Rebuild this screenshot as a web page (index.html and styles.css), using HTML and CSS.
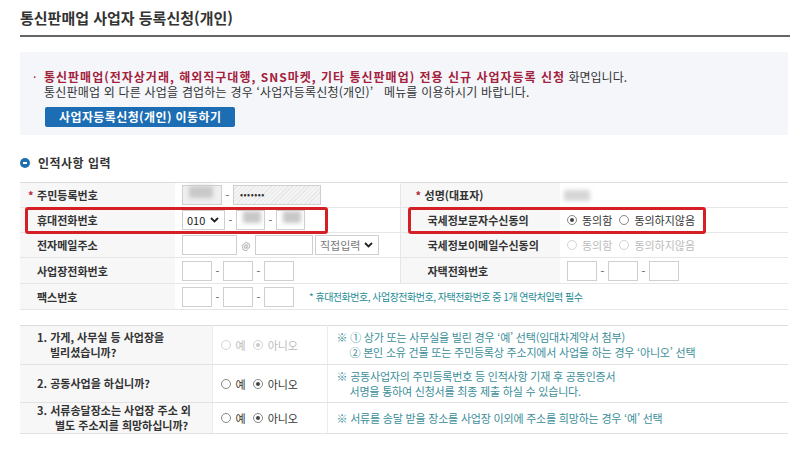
FILE: index.html
```html
<html lang="ko">
<head>
    <meta charset="UTF-8">
    <title>통신판매업 사업자 등록신청(개인)</title>
    <link rel="stylesheet" href="styles.css">
</head>
<body>
<div class="page">
    <h1 class="title">통신판매업 사업자 등록신청(개인)</h1>

    <div class="notice">
        <p class="notice-main"><span class="bullet">·</span><strong>통신판매업(전자상거래, 해외직구대행, SNS마켓, 기타 통신판매업) 전용 신규 사업자등록 신청</strong> 화면입니다.</p>
        <p class="notice-sub">통신판매업 외 다른 사업을 겸업하는 경우 ‘사업자등록신청(개인)’&nbsp;&nbsp; 메뉴를 이용하시기 바랍니다.</p>
        <a class="btn" href="#">사업자등록신청(개인) 이동하기</a>
    </div>

    <h2 class="section"><span class="section-icon"></span>인적사항 입력</h2>

    <div class="form-wrap">
        <table class="form">
            <colgroup><col class="c1"><col class="c2"><col class="c3"><col class="c4"></colgroup>
            <tr>
                <th><span class="req">*</span> 주민등록번호</th>
                <td><span class="box w40 filled"><span class="blur"></span></span><span class="dash">-</span><span class="box w88 hatch">•••••••</span></td>
                <th><span class="req">*</span> 성명(대표자)</th>
                <td><span class="blur name"></span></td>
            </tr>
            <tr>
                <th class="ind">휴대전화번호</th>
                <td><span class="select w43">010<svg width="9" height="6" viewBox="0 0 9 6"><path d="M1 1l3.5 3.5L8 1" fill="none" stroke="#222" stroke-width="1.8"/></svg></span><span class="dash">-</span><span class="box w29"><span class="blur sm"></span></span><span class="dash">-</span><span class="box w29"><span class="blur sm"></span></span></td>
                <th class="ind">국세정보문자수신동의</th>
                <td><label class="radio on"><span class="dot"></span>동의함</label><label class="radio"><span class="dot"></span>동의하지않음</label></td>
            </tr>
            <tr>
                <th class="ind">전자메일주소</th>
                <td><span class="box w55"></span><span class="at">@</span><span class="box w58"></span><span class="select w64 gray">직접입력<svg width="9" height="6" viewBox="0 0 9 6"><path d="M1 1l3.5 3.5L8 1" fill="none" stroke="#222" stroke-width="1.8"/></svg></span></td>
                <th class="ind">국세정보이메일수신동의</th>
                <td><label class="radio off"><span class="dot"></span>동의함</label><label class="radio off"><span class="dot"></span>동의하지않음</label></td>
            </tr>
            <tr class="tall">
                <th class="ind">사업장전화번호</th>
                <td><span class="box w30"></span><span class="dash">-</span><span class="box w30"></span><span class="dash">-</span><span class="box w30"></span></td>
                <th class="ind">자택전화번호</th>
                <td><span class="box w30"></span><span class="dash">-</span><span class="box w30"></span><span class="dash">-</span><span class="box w30"></span></td>
            </tr>
            <tr class="tall">
                <th class="ind">팩스번호</th>
                <td colspan="3"><span class="box w30"></span><span class="dash">-</span><span class="box w30"></span><span class="dash">-</span><span class="box w30"></span><span class="hint">* 휴대전화번호, 사업장전화번호, 자택전화번호 중 1개 연락처입력 필수</span></td>
            </tr>
        </table>
        <div class="mark mark-left"></div>
        <div class="mark mark-right"></div>
    </div>

    <table class="qa">
        <colgroup><col class="q1"><col class="q2"><col class="q3"></colgroup>
        <tr class="r1">
            <th>1. 가게, 사무실 등 사업장을<br><span class="ind1">빌리셨습니까?</span></th>
            <td><label class="radio off"><span class="dot"></span>예</label><label class="radio off on"><span class="dot"></span>아니오</label></td>
            <td class="note">※ ① 상가 또는 사무실을 빌린 경우 ‘예’ 선택(임대차계약서 첨부)<br><span class="ind2">② 본인 소유 건물 또는 주민등록상 주소지에서 사업을 하는 경우 ‘아니오’ 선택</span></td>
        </tr>
        <tr class="r2">
            <th>2. 공동사업을 하십니까?</th>
            <td><label class="radio"><span class="dot"></span>예</label><label class="radio on"><span class="dot"></span>아니오</label></td>
            <td class="note">※ 공동사업자의 주민등록번호 등 인적사항 기재 후 공동인증서<br><span class="ind2">서명을 통하여 신청서를 최종 제출 하실 수 있습니다.</span></td>
        </tr>
        <tr class="r3">
            <th>3. 서류송달장소는 사업장 주소 외<br><span class="ind3">별도 주소지를 희망하십니까?</span></th>
            <td><label class="radio"><span class="dot"></span>예</label><label class="radio on"><span class="dot"></span>아니오</label></td>
            <td class="note">※ 서류를 송달 받을 장소를 사업장 이외에 주소를 희망하는 경우 ‘예’ 선택</td>
        </tr>
    </table>
</div>
</body>
</html>
```

FILE: styles.css
```css
body {
    margin: 0;
    padding: 0;
    background: #fff;
    font-family: "Noto Sans CJK KR", "Noto Sans", sans-serif;
    font-size: 11px;
    color: #333;
}
.page {
    padding: 9px 12px 0 20px;
}
.title {
    margin: 0;
    font-size: 15px;
    line-height: 18px;
    font-weight: bold;
    color: #333;
    padding-bottom: 8px;
    border-bottom: 2px solid #666;
    margin-right: -2px;
}
.notice {
    margin-top: 15px;
    background: #f4f6fa;
    padding: 17px 13px 7px 13px;
    height: 59px;
}
.notice p {
    margin: 0;
    font-size: 12px;
    line-height: 15px;
}
.notice-main strong {
    color: #a3213a;
    font-weight: bold;
    letter-spacing: 1px;
}
.bullet {
    display: inline-block;
    width: 11px;
    color: #a3213a;
}
.notice-sub {
    padding-left: 11px;
    letter-spacing: 0.2px;
}
.btn {
    display: inline-block;
    margin: 8px 0 0 12px;
    height: 20px;
    line-height: 20px;
    padding: 0 14px;
    background: #1c6db3;
    color: #fff;
    font-size: 12px;
    font-weight: bold;
    letter-spacing: 0.4px;
    text-decoration: none;
    border-radius: 2px;
}
.section {
    margin: 20px 0 12px 0;
    font-size: 12px;
    letter-spacing: 0.5px;
    line-height: 15px;
    font-weight: bold;
    color: #333;
    display: flex;
    align-items: center;
}
.section-icon {
    width: 10px;
    height: 10px;
    border-radius: 50%;
    background: #1f6fae;
    margin-right: 8px;
    position: relative;
}
.section-icon::after {
    content: "";
    position: absolute;
    left: 3px;
    top: 4px;
    width: 4px;
    height: 2px;
    background: #fff;
}
.form-wrap {
    position: relative;
}
table {
    border-collapse: collapse;
    table-layout: fixed;
    width: 768px;
    font-size: 11px;
    color: #333;
}
.c1 { width: 155px; }
.c2 { width: 225px; }
.c3 { width: 160px; }
.c4 { width: 228px; }
.form {
    border-top: 1px solid #dcdcdc;
}
.form th, .form td {
    height: 25px;
    padding: 0;
    border-bottom: 1px solid #e6e6e6;
    vertical-align: middle;
    white-space: nowrap;
}
.form tr.tall th, .form tr.tall td {
    height: 26px;
}
.form th {
    background: #f7f7f7;
    text-align: left;
    font-weight: bold;
    color: #333;
    padding-left: 8px;
    border-left: 1px solid #e6e6e6;
}
.form th:first-child {
    border-left: none;
}
.form th.ind {
    padding-left: 17px;
}
.form th:nth-child(3) {
    padding-left: 15px;
}
.form th.ind:nth-child(3) {
    padding-left: 27px;
}
.form td {
    padding-left: 7px;
}
.req {
    color: #b3263a;
    display: inline-block;
    width: 6px;
}
.box {
    display: inline-block;
    vertical-align: middle;
    height: 20px;
    border: 1px solid #cfcfcf;
    background: #fff;
    box-sizing: border-box;
    line-height: 18px;
    padding-left: 6px;
}
.w29 { width: 29px; }
.w30 { width: 30px; }
.w40 { width: 40px; }
.w55 { width: 55px; }
.w58 { width: 58px; }
.w88 { width: 88px; }
.box.filled {
    background: #f0f0f0;
}
.box.hatch {
    background: repeating-linear-gradient(135deg, #f4f4f4 0, #f4f4f4 2px, #e8e8e8 2px, #e8e8e8 3px);
    font-size: 9px;
    letter-spacing: 0.5px;
    color: #333;
}
.blur {
    display: inline-block;
    width: 24px;
    height: 12px;
    background: #c8c8c8;
    filter: blur(2px);
    vertical-align: middle;
}
.blur.sm {
    width: 18px;
}
.blur.name {
    width: 26px;
    height: 11px;
    background: #d6d6d6;
    margin-left: -3px;
}
.dash, .at {
    display: inline-block;
    width: 11px;
    text-align: center;
    vertical-align: middle;
    color: #555;
}
.at {
    width: 18px;
    font-size: 9px;
    color: #888;
}
.select {
    display: inline-flex;
    vertical-align: middle;
    align-items: center;
    justify-content: space-between;
    height: 20px;
    box-sizing: border-box;
    border: 1px solid #cfcfcf;
    padding: 0 5px 0 4px;
    background: #fff;
    color: #222;
}
.select.gray {
    color: #777;
    margin-left: 2px;
}
.w43 { width: 43px; }
.w64 { width: 64px; }
.hint {
    color: #1f8b96;
    font-size: 10px;
    letter-spacing: -0.5px;
    margin-left: 15px;
    vertical-align: middle;
}
.radio {
    display: inline-flex;
    align-items: center;
    margin-right: 7px;
    color: #333;
    vertical-align: middle;
}
.radio .dot {
    width: 10px;
    height: 10px;
    border: 1px solid #888;
    border-radius: 50%;
    box-sizing: border-box;
    margin-right: 5px;
    position: relative;
    background: #fff;
}
.radio.on .dot::after {
    content: "";
    position: absolute;
    left: 2px;
    top: 2px;
    width: 4px;
    height: 4px;
    border-radius: 50%;
    background: #444;
}
.radio.off {
    color: #bbb;
}
.radio.off .dot {
    border-color: #d4d4d4;
}
.radio.off.on .dot::after {
    background: #c8c8c8;
}
.mark {
    position: absolute;
    top: 25px;
    height: 27px;
    border: 3px solid #d41f26;
    border-radius: 3px;
    box-sizing: border-box;
}
.mark-left {
    left: 5px;
    width: 303px;
}
.mark-right {
    left: 388px;
    width: 298px;
}
.qa {
    margin-top: 15px;
    border-top: 1px solid #dcdcdc;
}
.q1 { width: 192px; }
.q2 { width: 115px; }
.q3 { width: 461px; }
.qa th, .qa td {
    padding: 0;
    border-bottom: 1px solid #e2e2e2;
    vertical-align: middle;
}
.qa th {
    background: #f7f7f7;
    text-align: left;
    font-weight: bold;
    color: #333;
    padding-left: 17px;
    line-height: 15px;
    white-space: nowrap;
}
.ind1 {
    padding-left: 13px;
}
.ind3 {
    padding-left: 18px;
}
.qa .r1 th, .qa .r1 td { height: 39px; }
.qa .r2 th, .qa .r2 td { height: 38px; }
.qa .r3 th, .qa .r3 td { height: 31px; }
.qa td {
    border-left: 1px solid #ececec;
    padding-left: 8px;
    white-space: nowrap;
}
.qa td.note {
    color: #3b8e99;
    line-height: 15px;
    padding-left: 9px;
    letter-spacing: -0.2px;
}
.ind2 {
    padding-left: 13px;
}
```
